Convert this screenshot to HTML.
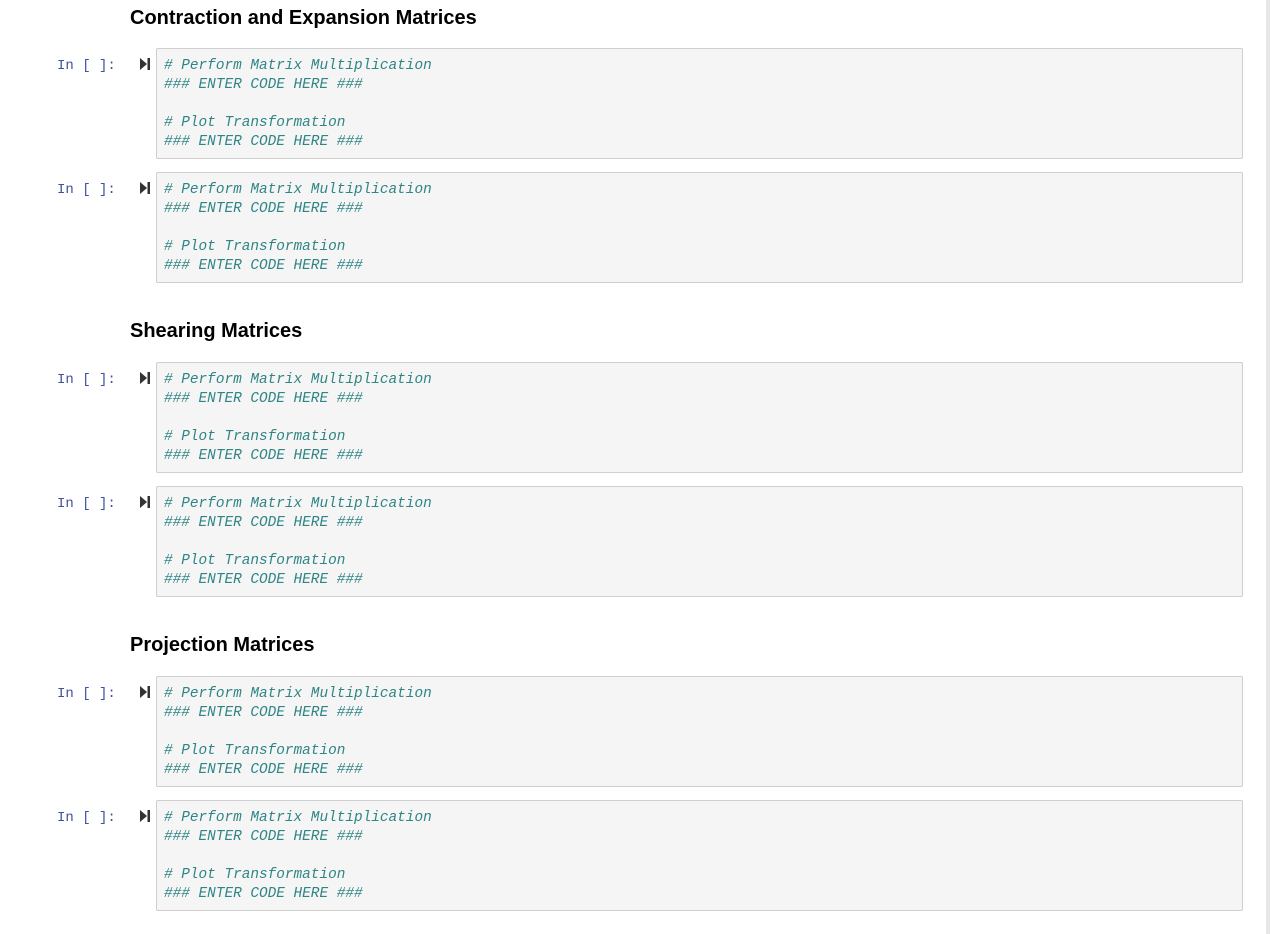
<!DOCTYPE html>
<html><head><meta charset="utf-8"><style>
body{margin:0;width:1270px;height:934px;background:#fff;position:relative;overflow:hidden;font-family:"Liberation Sans",sans-serif}
h2{position:absolute;left:130px;margin:0;font-size:20px;font-weight:bold;color:#000;line-height:24px}
.p{position:absolute;left:57px;font-family:"Liberation Mono",monospace;font-size:14px;color:#3f51a0;line-height:19px}
.r{position:absolute;left:139px;width:12px;height:14px}
.c{position:absolute;left:156px;width:1085px;height:109px;background:#f5f5f5;border:1px solid #cfcfcf;border-radius:2px}
.c pre{margin:0;padding:8px 0 0 7px;font-family:"Liberation Mono",monospace;font-style:italic;font-size:14.4px;line-height:19px;color:#2f8585}
.sb{position:absolute;right:0;top:0;width:4px;height:934px;background:#e8e8e8}
</style></head><body>
<div class="sb"></div>
<h2 style="top:6px">Contraction and Expansion Matrices</h2>
<h2 style="top:319px">Shearing Matrices</h2>
<h2 style="top:633px">Projection Matrices</h2>

<div class="p" style="top:57px">In [ ]:</div><svg class="r" style="top:57px" viewBox="0 0 12 14"><path d="M1 1L8 7L1 13Z M8.5 1H11V13H8.5Z" fill="#333"/></svg>
<div class="c" style="top:48px"><pre># Perform Matrix Multiplication
### ENTER CODE HERE ###

# Plot Transformation
### ENTER CODE HERE ###</pre></div>

<div class="p" style="top:181px">In [ ]:</div><svg class="r" style="top:181px" viewBox="0 0 12 14"><path d="M1 1L8 7L1 13Z M8.5 1H11V13H8.5Z" fill="#333"/></svg>
<div class="c" style="top:172px"><pre># Perform Matrix Multiplication
### ENTER CODE HERE ###

# Plot Transformation
### ENTER CODE HERE ###</pre></div>

<div class="p" style="top:371px">In [ ]:</div><svg class="r" style="top:371px" viewBox="0 0 12 14"><path d="M1 1L8 7L1 13Z M8.5 1H11V13H8.5Z" fill="#333"/></svg>
<div class="c" style="top:362px"><pre># Perform Matrix Multiplication
### ENTER CODE HERE ###

# Plot Transformation
### ENTER CODE HERE ###</pre></div>

<div class="p" style="top:495px">In [ ]:</div><svg class="r" style="top:495px" viewBox="0 0 12 14"><path d="M1 1L8 7L1 13Z M8.5 1H11V13H8.5Z" fill="#333"/></svg>
<div class="c" style="top:486px"><pre># Perform Matrix Multiplication
### ENTER CODE HERE ###

# Plot Transformation
### ENTER CODE HERE ###</pre></div>

<div class="p" style="top:685px">In [ ]:</div><svg class="r" style="top:685px" viewBox="0 0 12 14"><path d="M1 1L8 7L1 13Z M8.5 1H11V13H8.5Z" fill="#333"/></svg>
<div class="c" style="top:676px"><pre># Perform Matrix Multiplication
### ENTER CODE HERE ###

# Plot Transformation
### ENTER CODE HERE ###</pre></div>

<div class="p" style="top:809px">In [ ]:</div><svg class="r" style="top:809px" viewBox="0 0 12 14"><path d="M1 1L8 7L1 13Z M8.5 1H11V13H8.5Z" fill="#333"/></svg>
<div class="c" style="top:800px"><pre># Perform Matrix Multiplication
### ENTER CODE HERE ###

# Plot Transformation
### ENTER CODE HERE ###</pre></div>
</body></html>
